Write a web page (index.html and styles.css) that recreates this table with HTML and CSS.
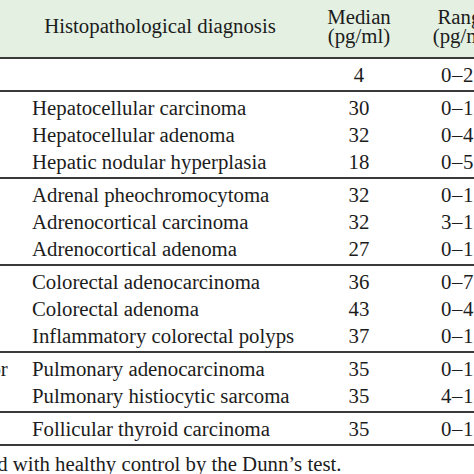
FILE: index.html
```html
<!DOCTYPE html>
<html lang="en">
<head>
<meta charset="UTF-8">
<meta name="viewport" content="width=device-width, initial-scale=1.0">
<title>Table 2</title>
<link rel="stylesheet" href="styles.css">
</head>
<body>
<div class="frame">
    <div class="sheet">
        <table class="data">
            <colgroup>
                <col class="c-cat">
                <col class="c-diag">
                <col class="c-med">
                <col class="c-rng">
            </colgroup>
            <thead>
                <tr>
                    <th><div class="hd"></div></th>
                    <th><div class="hd">Histopathological diagnosis</div></th>
                    <th><div class="hd">Median<br>(pg/ml)</div></th>
                    <th><div class="hd">Range<br>(pg/ml)</div></th>
                </tr>
            </thead>
            <tbody>
                <tr><td class="cat">Control</td><td class="diag"></td><td class="num">4</td><td class="rng">0–28</td></tr>
            </tbody>
            <tbody>
                <tr><td class="cat">Liver</td><td class="diag">Hepatocellular carcinoma</td><td class="num">30</td><td class="rng">0–164</td></tr>
                <tr><td class="cat"></td><td class="diag">Hepatocellular adenoma</td><td class="num">32</td><td class="rng">0–412</td></tr>
                <tr><td class="cat"></td><td class="diag">Hepatic nodular hyperplasia</td><td class="num">18</td><td class="rng">0–556</td></tr>
            </tbody>
            <tbody>
                <tr><td class="cat">Adrenal</td><td class="diag">Adrenal pheochromocytoma</td><td class="num">32</td><td class="rng">0–137</td></tr>
                <tr><td class="cat"></td><td class="diag">Adrenocortical carcinoma</td><td class="num">32</td><td class="rng">3–118</td></tr>
                <tr><td class="cat"></td><td class="diag">Adrenocortical adenoma</td><td class="num">27</td><td class="rng">0–105</td></tr>
            </tbody>
            <tbody>
                <tr><td class="cat">Intestine</td><td class="diag">Colorectal adenocarcinoma</td><td class="num">36</td><td class="rng">0–736</td></tr>
                <tr><td class="cat"></td><td class="diag">Colorectal adenoma</td><td class="num">43</td><td class="rng">0–449</td></tr>
                <tr><td class="cat"></td><td class="diag">Inflammatory colorectal polyps</td><td class="num">37</td><td class="rng">0–152</td></tr>
            </tbody>
            <tbody>
                <tr><td class="cat">Lung tumor</td><td class="diag">Pulmonary adenocarcinoma</td><td class="num">35</td><td class="rng">0–126</td></tr>
                <tr><td class="cat"></td><td class="diag">Pulmonary histiocytic sarcoma</td><td class="num">35</td><td class="rng">4–143</td></tr>
            </tbody>
            <tbody>
                <tr><td class="cat">Thyroid</td><td class="diag">Follicular thyroid carcinoma</td><td class="num">35</td><td class="rng">0–110</td></tr>
            </tbody>
        </table>
        <p class="note">Compared with healthy control by the Dunn’s test.</p>
    </div>
</div>
</body>
</html>
```

FILE: styles.css
```css
body, html {
    margin: 0;
    padding: 0;
    background: #fff;
}

.frame {
    width: 474px;
    height: 474px;
    overflow: hidden;
}

.sheet {
    margin-left: -95px;
    width: 597px;
    font-family: "Liberation Serif", "Times New Roman", serif;
    font-size: 20.8px;
    color: #1c1c1c;
}

.data {
    border-collapse: collapse;
    table-layout: fixed;
    width: 597px;
}

.c-cat { width: 123px; }
.c-diag { width: 264px; }
.c-med { width: 134px; }
.c-rng { width: 76px; }

.data th {
    padding: 0;
    font-weight: normal;
    background: #e3f0e2;
    vertical-align: top;
}

.hd {
    height: 57px;
    box-sizing: border-box;
    padding-bottom: 6px;
    display: flex;
    flex-direction: column;
    justify-content: center;
    text-align: center;
    line-height: 19px;
}

.data tbody {
    border-top: 2px solid #3a3a3a;
}

.data tbody:last-child {
    border-bottom: 2px solid #3a3a3a;
}

.data td {
    padding: 0;
    line-height: 27px;
    vertical-align: top;
    white-space: nowrap;
}

.data tr:first-child td {
    padding-top: 2px;
}

.data tr:last-child td {
    padding-bottom: 2px;
}

.cat,
.diag {
    padding-left: 4px !important;
}

.num {
    text-align: center;
}

.rng {
    padding-left: 15px !important;
    letter-spacing: 0.6px;
}

.note {
    margin: 4px 0 0;
    padding-left: 16px;
    line-height: 27px;
    white-space: nowrap;
}
```
